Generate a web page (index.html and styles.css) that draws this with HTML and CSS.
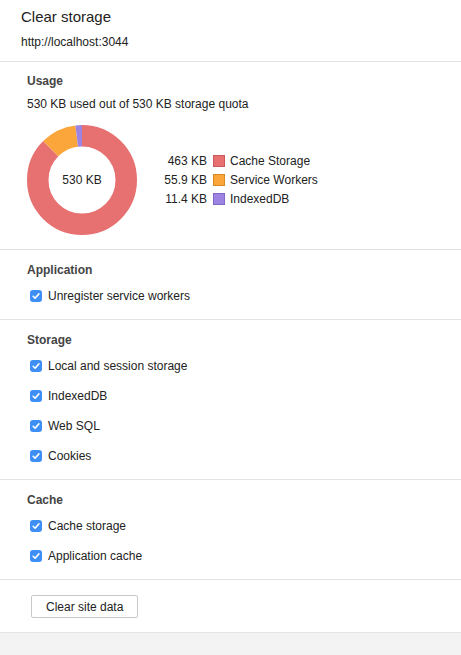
FILE: index.html
```html
<!DOCTYPE html>
<html>
<head>
<meta charset="utf-8">
<link rel="stylesheet" href="styles.css">
</head>
<body>
<div class="page">
  <div class="header">
    <div class="title">Clear storage</div>
    <div class="url">http://localhost:3044</div>
  </div>
  <div class="section">
    <div class="sec-title">Usage</div>
    <div class="usage-text">530 KB used out of 530 KB storage quota</div>
    <div class="chart-row">
      <div class="donut">
        <svg width="110" height="110" viewBox="0 0 110 110">
          <g transform="rotate(-90 55 55)" fill="none" stroke-width="21.5">
            <circle cx="55" cy="55" r="44.25" stroke="#e77071" stroke-dasharray="242.9 400"/>
            <circle cx="55" cy="55" r="44.25" stroke="#fba63a" stroke-dasharray="29.32 400" stroke-dashoffset="-242.9"/>
            <circle cx="55" cy="55" r="44.25" stroke="#9d84e2" stroke-dasharray="5.98 400" stroke-dashoffset="-272.22"/>
          </g>
        </svg>
        <div class="donut-label">530 KB</div>
      </div>
      <div class="legend">
        <div class="legend-row"><span class="val">463 KB</span><span class="swatch red"></span><span class="lbl">Cache Storage</span></div>
        <div class="legend-row"><span class="val">55.9 KB</span><span class="swatch orange"></span><span class="lbl">Service Workers</span></div>
        <div class="legend-row"><span class="val">11.4 KB</span><span class="swatch purple"></span><span class="lbl">IndexedDB</span></div>
      </div>
    </div>
  </div>
  <div class="section opts">
    <div class="sec-title">Application</div>
    <label class="row"><span class="cb"><svg width="12" height="12" viewBox="0 0 12 12"><path d="M3.2 6.3 L5.1 8.2 L8.9 3.9" fill="none" stroke="#fff" stroke-width="1.6" stroke-linecap="round" stroke-linejoin="round"/></svg></span>Unregister service workers</label>
  </div>
  <div class="section opts">
    <div class="sec-title">Storage</div>
    <label class="row"><span class="cb"><svg width="12" height="12" viewBox="0 0 12 12"><path d="M3.2 6.3 L5.1 8.2 L8.9 3.9" fill="none" stroke="#fff" stroke-width="1.6" stroke-linecap="round" stroke-linejoin="round"/></svg></span>Local and session storage</label>
    <label class="row"><span class="cb"><svg width="12" height="12" viewBox="0 0 12 12"><path d="M3.2 6.3 L5.1 8.2 L8.9 3.9" fill="none" stroke="#fff" stroke-width="1.6" stroke-linecap="round" stroke-linejoin="round"/></svg></span>IndexedDB</label>
    <label class="row"><span class="cb"><svg width="12" height="12" viewBox="0 0 12 12"><path d="M3.2 6.3 L5.1 8.2 L8.9 3.9" fill="none" stroke="#fff" stroke-width="1.6" stroke-linecap="round" stroke-linejoin="round"/></svg></span>Web SQL</label>
    <label class="row"><span class="cb"><svg width="12" height="12" viewBox="0 0 12 12"><path d="M3.2 6.3 L5.1 8.2 L8.9 3.9" fill="none" stroke="#fff" stroke-width="1.6" stroke-linecap="round" stroke-linejoin="round"/></svg></span>Cookies</label>
  </div>
  <div class="section opts">
    <div class="sec-title">Cache</div>
    <label class="row"><span class="cb"><svg width="12" height="12" viewBox="0 0 12 12"><path d="M3.2 6.3 L5.1 8.2 L8.9 3.9" fill="none" stroke="#fff" stroke-width="1.6" stroke-linecap="round" stroke-linejoin="round"/></svg></span>Cache storage</label>
    <label class="row"><span class="cb"><svg width="12" height="12" viewBox="0 0 12 12"><path d="M3.2 6.3 L5.1 8.2 L8.9 3.9" fill="none" stroke="#fff" stroke-width="1.6" stroke-linecap="round" stroke-linejoin="round"/></svg></span>Application cache</label>
  </div>
  <div class="footer">
    <button class="btn">Clear site data</button>
  </div>
  <div class="rest"></div>
</div>
</body>
</html>
```

FILE: styles.css
```css
html, body {
  margin: 0;
  padding: 0;
  height: 100%;
}
body {
  font-family: "Liberation Sans", Arial, sans-serif;
  font-size: 12px;
  color: #222;
  background: #f3f3f3;
}
.page {
  display: flex;
  flex-direction: column;
  min-height: 100%;
}
.header {
  background: #fff;
  padding: 8px 0 11px 21px;
  border-bottom: 1px solid #e3e3e3;
}
.title {
  font-size: 15px;
  line-height: 18px;
  color: #222;
}
.url {
  margin-top: 8px;
  line-height: 16px;
}
.section {
  background: #fff;
  padding: 11px 0 14px 27px;
  border-bottom: 1px solid #e3e3e3;
}
.section.opts {
  padding-top: 12px;
  padding-bottom: 8px;
}
.sec-title {
  font-weight: bold;
  color: #444;
  line-height: 16px;
}
.usage-text {
  margin-top: 7px;
  line-height: 16px;
}
.chart-row {
  margin-top: 13px;
  display: flex;
  align-items: center;
}
.donut {
  position: relative;
  width: 110px;
  height: 110px;
}
.donut svg {
  display: block;
}
.donut-label {
  position: absolute;
  left: 0;
  right: 0;
  top: 47px;
  text-align: center;
  line-height: 16px;
}
.legend {
  margin-left: 10px;
  display: flex;
  flex-direction: column;
}
.legend-row {
  display: flex;
  align-items: center;
  height: 19px;
}
.val {
  width: 60px;
  text-align: right;
}
.swatch {
  width: 10px;
  height: 10px;
  margin-left: 6px;
  border: 1px solid;
}
.swatch.red { background: #e77071; border-color: #c9595a; }
.swatch.orange { background: #fba63a; border-color: #db8a22; }
.swatch.purple { background: #9d84e2; border-color: #8068c6; }
.lbl {
  margin-left: 5px;
}
.row {
  display: flex;
  align-items: center;
  height: 30px;
}
.sec-title + .row {
  margin-top: 3px;
}
.cb {
  width: 12px;
  height: 12px;
  margin-left: 3px;
  margin-right: 6px;
  border-radius: 3px;
  background: #3d8ff5;
  display: flex;
}
.footer {
  background: #fff;
  padding: 15px 0 14px 31px;
  border-bottom: 1px solid #e3e3e3;
}
.btn {
  display: block;
  height: 23px;
  padding: 0 14px;
  font-family: "Liberation Sans", Arial, sans-serif;
  font-size: 12px;
  color: #222;
  background: #fff;
  border: 1px solid #c8c8c8;
  border-radius: 2px;
}
.rest {
  flex: 1;
  background: #f3f3f3;
}
```
